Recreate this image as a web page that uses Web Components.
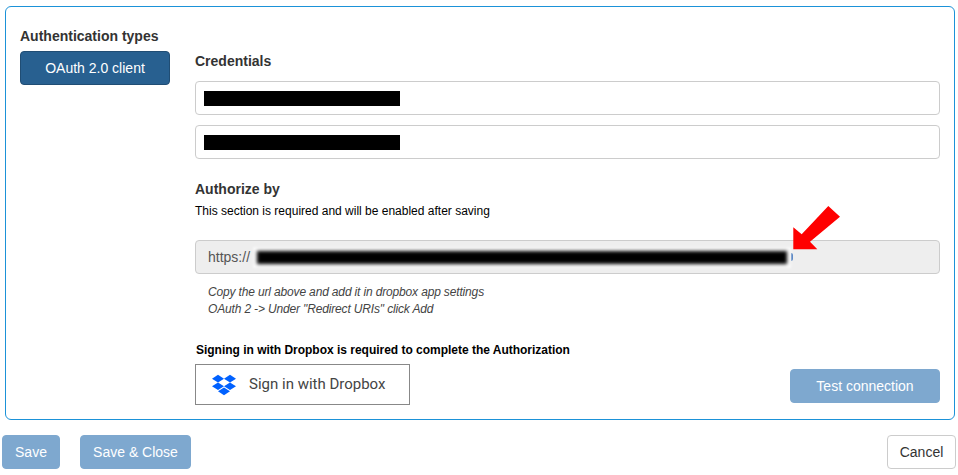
<!DOCTYPE html>
<html>
<head>
<meta charset="utf-8">
<title>Dropbox connection</title>
<style>
    html, body { margin: 0; background: #fff; }
    body { font-family: "Liberation Sans", Arial, sans-serif; font-size: 14px; color: #333; }
</style>
</head>
<body>
<connection-page></connection-page>

<script>
class UiButton extends HTMLElement {
    constructor() {
        super();
        this.attachShadow({mode: 'open'});
        this.shadowRoot.innerHTML = `
        <style>
            :host {
                display: flex;
                align-items: center;
                justify-content: center;
                box-sizing: border-box;
                height: 34px;
                border: 1px solid transparent;
                border-radius: 4px;
                font-size: 14px;
                white-space: nowrap;
            }
            :host([variant="active"]) { background: #286090; border-color: #204d74; color: #fff; }
            :host([variant="disabled"]) { background: #7ea8cf; border-color: #7ea8cf; color: #fff; }
            :host([variant="plain"]) { background: #fff; border-color: #ccc; color: #333; }
        </style>
        <slot></slot>
        `;
    }
}

class TextField extends HTMLElement {
    constructor() {
        super();
        this.attachShadow({mode: 'open'});
        this.shadowRoot.innerHTML = `
        <style>
            :host {
                display: flex;
                align-items: center;
                box-sizing: border-box;
                height: 34px;
                padding: 0 12px 0 8px;
                border: 1px solid #ccc;
                border-radius: 4px;
                background: #fff;
                color: #555;
                font-size: 14px;
            }
            :host([readonly]) { background: #eee; padding-left: 12px; }
        </style>
        <slot></slot>
        `;
    }
}

class RedactBar extends HTMLElement {
    constructor() {
        super();
        this.attachShadow({mode: 'open'});
        this.shadowRoot.innerHTML = `
        <style>
            :host {
                display: block;
                flex: none;
                background: #000;
                width: var(--bar-width, 196px);
                height: var(--bar-height, 15px);
                filter: blur(var(--bar-blur, 0.6px));
            }
        </style>
        `;
    }
}

class DropboxButton extends HTMLElement {
    constructor() {
        super();
        this.attachShadow({mode: 'open'});
        this.shadowRoot.innerHTML = `
        <style>
            :host {
                display: flex;
                align-items: center;
                box-sizing: border-box;
                width: 215px;
                height: 41px;
                padding-left: 16px;
                border: 1px solid #888;
                background: #fff;
                color: #444;
                font-family: Roboto, sans-serif;
                font-size: 15px;
            }
            svg { width: 24px; height: 24px; margin-right: 13px; fill: #0061ff; }
            span { position: relative; top: -1px; }
        </style>
        <svg viewBox="0 0 24 24"><path d="M6 1.807L0 5.629l6 3.822 6.001-3.822L6 1.807zM18 1.807l-6 3.822 6 3.822 6-3.822-6-3.822zM0 13.274l6 3.822 6.001-3.822L6 9.452l-6 3.822zM18 9.452l-6 3.822 6 3.822 6-3.822-6-3.822zM6 18.371l6.001 3.822 6-3.822-6-3.822L6 18.371z"/></svg>
        <span><slot></slot></span>
        `;
    }
}

class ConnectionPage extends HTMLElement {
    constructor() {
        super();
        this.attachShadow({mode: 'open'});
        this.shadowRoot.innerHTML = `
        <style>
            :host { display: block; position: relative; width: 958px; height: 475px; overflow: hidden; }
            .panel {
                display: flex;
                gap: 25px;
                box-sizing: border-box;
                height: 414px;
                margin: 6px 3px 0 5px;
                padding: 19px 14px 0;
                border: 1px solid #1b92d8;
                border-radius: 6px;
            }
            .side { width: 150px; flex: none; }
            .main { flex: 1; min-width: 0; padding-top: 25px; }
            h4 { margin: 0; font-size: 14px; line-height: 20px; font-weight: bold; color: #333; }
            .side ui-button { margin-top: 5px; }
            .creds { display: grid; gap: 10px; margin-top: 10px; }
            .authorize { margin-top: 20px; }
            .small { font-size: 12px; line-height: 17px; color: #000; }
            .required { margin-top: 4px; }
            .url { margin-top: 20px; }
            .url span { margin-right: 3px; }
            .mask {
                display: flex;
                align-items: center;
                padding: 4px;
                background: #f9f9f9;
                filter: blur(0.8px);
            }
            .url redact-bar {
                --bar-width: 530px;
                --bar-height: 13px;
                --bar-blur: 1.8px;
            }
            .caret { width: 2px; height: 8px; border-radius: 0 2px 2px 0; background: #4f7fc0; }
            .hints { margin-top: 10px; padding-left: 13px; font-size: 12px; line-height: 17px; font-style: italic; color: #444; letter-spacing: -0.155px; }
            .signing { margin-top: 24px; padding-left: 1px; font-weight: bold; letter-spacing: -0.015px; }
            .signin-row { display: flex; justify-content: space-between; align-items: flex-end; margin-top: 5px; }
            .signin-row ui-button { width: 150px; margin-bottom: 2px; }
            .footer { display: flex; gap: 20px; margin-top: 15px; padding: 0 2px; }
            .cancel { margin-left: auto; width: 69px; }
            .arrow { position: absolute; left: 790px; top: 204px; width: 52px; height: 48px; }
        </style>
        <div class="panel">
            <div class="side">
                <h4>Authentication types</h4>
                <ui-button variant="active">OAuth 2.0 client</ui-button>
            </div>
            <div class="main">
                <h4>Credentials</h4>
                <div class="creds">
                    <text-field><redact-bar></redact-bar></text-field>
                    <text-field><redact-bar></redact-bar></text-field>
                </div>
                <h4 class="authorize">Authorize by</h4>
                <div class="small required">This section is required and will be enabled after saving</div>
                <text-field class="url" readonly><span>https://</span><div class="mask"><redact-bar></redact-bar></div><div class="caret"></div></text-field>
                <div class="hints">
                    <div>Copy the url above and add it in dropbox app settings</div>
                    <div>OAuth 2 -&gt; Under "Redirect URIs" click Add</div>
                </div>
                <div class="small signing">Signing in with Dropbox is required to complete the Authorization</div>
                <div class="signin-row">
                    <dropbox-button>Sign in with Dropbox</dropbox-button>
                    <ui-button variant="disabled">Test connection</ui-button>
                </div>
            </div>
        </div>
        <div class="footer">
            <ui-button variant="disabled" style="width:58px">Save</ui-button>
            <ui-button variant="disabled" style="width:111px">Save &amp; Close</ui-button>
            <ui-button variant="plain" class="cancel">Cancel</ui-button>
        </div>
        <svg class="arrow" viewBox="790 204 52 48"><polygon fill="#f00" points="793.3,227.3 801.7,234.3 828.3,206 840,216.7 810,241.7 817.3,249.3 793.3,249.3"/></svg>
        `;
    }
}

window.customElements.define('ui-button', UiButton);
window.customElements.define('text-field', TextField);
window.customElements.define('redact-bar', RedactBar);
window.customElements.define('dropbox-button', DropboxButton);
window.customElements.define('connection-page', ConnectionPage);
</script>
</body>
</html>
